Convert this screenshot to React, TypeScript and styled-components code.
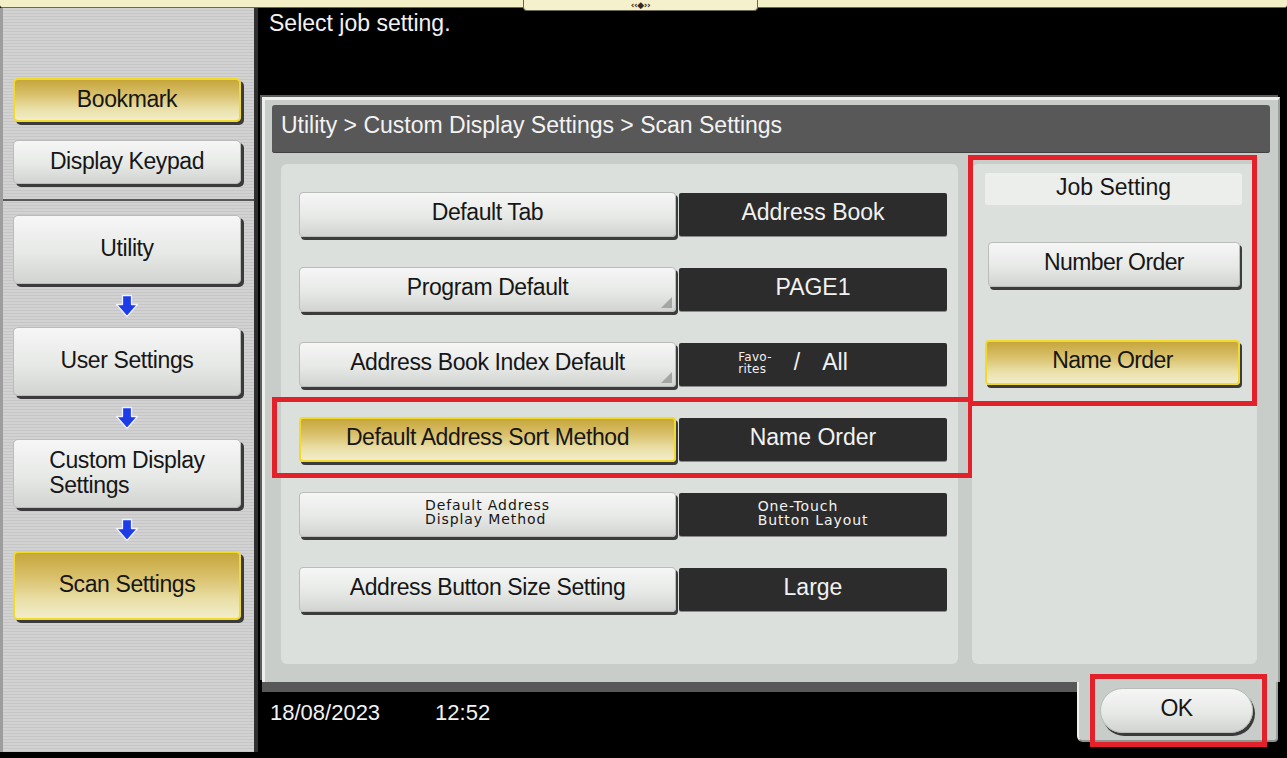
import React from "react";
import styled, {createGlobalStyle, css} from "styled-components";

const GlobalStyle = createGlobalStyle`
    html, body {
        margin: 0;
        padding: 0;
        background: #000;
    }
    body {
        font-family: "Liberation Sans", Arial, sans-serif;
    }
`;

const greyFace = css`
    background: linear-gradient(180deg, #f5f6f5 0%, #e7e9e7 55%, #d1d4d1 100%);
    border: 1px solid #b9bcb9;
`;

const goldFace = css`
    background: linear-gradient(180deg, #c6a63c 0%, #d8bf68 35%, #e9dea4 70%, #f2edcb 100%);
    border: 2px solid #f1da2c;
`;

const Screen = styled.div`
    width: 1287px;
    height: 758px;
    display: flex;
    flex-direction: column;
    background: #000;
    overflow: hidden;
`;

const TopBar = styled.div`
    height: 7px;
    flex-shrink: 0;
    display: flex;
    justify-content: center;
    background: #f3efc6;
    border-bottom: 1px solid #6b6852;
    border-radius: 0 0 3px 3px;
`;

const Handle = styled.div`
    position: relative;
    z-index: 2;
    width: 235px;
    height: 11px;
    margin-left: -6px;
    box-sizing: border-box;
    background: #f5f1cc;
    border: 1px solid #6b6852;
    border-top: none;
    border-radius: 0 0 4px 4px;
    font-family: "DejaVu Sans", sans-serif;
    font-size: 9px;
    font-weight: bold;
    line-height: 10px;
    letter-spacing: -0.5px;
    text-align: center;
    color: #2d2a1e;
`;

const Body = styled.div`
    flex: 1;
    display: flex;
    min-height: 0;
`;

const Sidebar = styled.aside`
    width: 258px;
    flex-shrink: 0;
    box-sizing: border-box;
    margin-bottom: 6px;
    display: flex;
    flex-direction: column;
    border-left: 3px solid #9d9d9d;
    border-right: 4px solid #2f2f2f;
    background: repeating-linear-gradient(180deg, #d2d2d2 0 2px, #c6c6c6 2px 3px);
`;

const ShortcutGroup = styled.div`
    display: flex;
    flex-direction: column;
    gap: 18px;
    padding: 70px 10px 15px;
    border-bottom: 2px solid #575757;
`;

const NavTrail = styled.nav`
    display: flex;
    flex-direction: column;
    padding: 14px 10px 0;
`;

const SideButton = styled.div<{ $active?: boolean; $tall?: boolean }>`
    width: 228px;
    height: ${p => p.$tall ? 69 : 44}px;
    box-sizing: border-box;
    padding-bottom: 2px;
    display: flex;
    align-items: center;
    justify-content: center;
    border-radius: 5px;
    box-shadow: 3px 3px 0 #3b3b3b;
    font-size: 23px;
    letter-spacing: -0.4px;
    color: #161616;
    ${p => p.$active ? goldFace : greyFace};
`;

const TwoLine = styled.span`
    display: inline-block;
    text-align: left;
    line-height: 25px;
`;

const ArrowSlot = styled.div`
    height: 43px;
    width: 228px;
    display: flex;
    align-items: center;
    justify-content: center;
`;

const Main = styled.main`
    flex: 1;
    display: flex;
    flex-direction: column;
    min-width: 0;
`;

const Message = styled.div`
    height: 89px;
    flex-shrink: 0;
    box-sizing: border-box;
    padding: 2px 0 0 11px;
    font-size: 23px;
    color: #f2f2f2;
`;

const Panel = styled.section`
    height: 585px;
    flex-shrink: 0;
    box-sizing: border-box;
    margin: 0 7px 0 4px;
    padding: 5px 8px 18px 7px;
    display: flex;
    flex-direction: column;
    background: #c8cdc9;
    border-top: 3px solid #eef0ee;
    border-left: 3px solid #eef0ee;
    border-right: 2px solid #9aa09b;
    box-shadow: -2px -2px 0 #5d5d5d;
`;

const Breadcrumb = styled.header`
    height: 48px;
    flex-shrink: 0;
    box-sizing: border-box;
    padding: 0 0 7px 9px;
    display: flex;
    align-items: center;
    background: #585858;
    border-radius: 3px;
    box-shadow: inset 0 -1px 0 #404040;
    font-size: 23px;
    color: #f3f3f3;
`;

const Content = styled.div`
    flex: 1;
    margin-top: 11px;
    padding: 0 13px 0 9px;
    display: flex;
    gap: 14px;
`;

const SettingsBox = styled.div`
    width: 677px;
    box-sizing: border-box;
    padding: 28px 0 0 18px;
    display: flex;
    flex-direction: column;
    gap: 30px;
    background: #dbe0dc;
    border-radius: 6px;
`;

const Row = styled.div`
    position: relative;
    display: flex;
    gap: 3px;
`;

const LabelButton = styled.div<{ $active?: boolean; $more?: boolean }>`
    position: relative;
    width: 377px;
    height: 45px;
    box-sizing: border-box;
    padding-bottom: 5px;
    display: flex;
    align-items: center;
    justify-content: center;
    border-radius: 4px;
    box-shadow: 2px 3px 0 #3c3c3c;
    font-size: 23px;
    letter-spacing: -0.4px;
    color: #161616;
    ${p => p.$active ? goldFace : greyFace};

    ${p => p.$more && css`
        &::after {
            content: "";
            position: absolute;
            right: 3px;
            bottom: 3px;
            border-left: 11px solid transparent;
            border-bottom: 11px solid #a3a6a3;
        }
    `}
`;

const ValueBox = styled.div<{ $shift?: number }>`
    width: 268px;
    height: 43px;
    margin-top: 1px;
    box-sizing: border-box;
    padding: 0 ${p => p.$shift ?? 0}px 4px 0;
    display: flex;
    align-items: center;
    justify-content: center;
    background: #2c2c2c;
    border-radius: 2px;
    box-shadow: 0 1px 0 #8a8a8a;
    font-size: 23px;
    color: #f2f2f2;
`;

const SmallText = styled.span<{ $size?: number }>`
    display: inline-block;
    text-align: left;
    font-family: "DejaVu Sans", sans-serif;
    font-size: ${p => p.$size ?? 14}px;
    line-height: ${p => p.$size ? p.$size : 14}px;
    letter-spacing: ${p => p.$size ? 0.3 : 0.9}px;
`;

const Split = styled.span`
    display: flex;
    align-items: center;
    gap: 22px;
`;

const JobBox = styled.div`
    position: relative;
    width: 285px;
    box-sizing: border-box;
    padding: 9px 0 0 13px;
    display: flex;
    flex-direction: column;
    background: #dbe0dc;
    border-radius: 6px;
`;

const JobLabel = styled.div`
    width: 257px;
    height: 32px;
    box-sizing: border-box;
    padding-bottom: 4px;
    display: flex;
    align-items: center;
    justify-content: center;
    background: #eceeec;
    border-radius: 3px;
    font-size: 23px;
    color: #161616;
`;

const ChoiceButton = styled.div<{ $active?: boolean; $gap: number }>`
    width: ${p => p.$active ? 255 : 252}px;
    height: 45px;
    margin: ${p => p.$gap}px 0 0 ${p => p.$active ? 0 : 3}px;
    box-sizing: border-box;
    padding-bottom: 5px;
    display: flex;
    align-items: center;
    justify-content: center;
    border-radius: 4px;
    box-shadow: 2px 3px 0 #3c3c3c;
    font-size: 23px;
    letter-spacing: -0.6px;
    color: #161616;
    ${p => p.$active ? goldFace : greyFace};
`;

const Footer = styled.footer`
    flex: 1;
    display: flex;
`;

const FooterInfo = styled.div`
    flex: 1;
    display: flex;
    flex-direction: column;
`;

const PanelLip = styled.div`
    height: 10px;
    margin-left: 4px;
    background: #585858;
`;

const Clock = styled.div`
    display: flex;
    gap: 55px;
    padding: 8px 0 0 12px;
    font-size: 22px;
    color: #f2f2f2;
`;

const OkTab = styled.div`
    position: relative;
    width: 201px;
    height: 60px;
    margin-right: 9px;
    box-sizing: border-box;
    padding: 6px 0 0 21px;
    background: #c8cdc9;
    border-left: 2px solid #eef0ee;
    border-right: 2px solid #9aa09b;
    border-bottom: 2px solid #8f948f;
    border-radius: 0 0 4px 6px;
`;

const OkButton = styled.div`
    width: 153px;
    height: 45px;
    box-sizing: border-box;
    padding-bottom: 4px;
    display: flex;
    align-items: center;
    justify-content: center;
    border-radius: 23px;
    box-shadow: 2px 3px 0 #3a3a3a;
    font-size: 23px;
    letter-spacing: -0.6px;
    color: #161616;
    ${greyFace};
`;

const Callout = styled.span<{ $inset: string }>`
    position: absolute;
    inset: ${p => p.$inset};
    border: 5px solid #e2212b;
    pointer-events: none;
`;

const DownArrow = () =>
    <svg width="26" height="24" viewBox="0 0 26 24">
        <path d="M8.5 1.5h9v9h6L13 22.5 2.5 10.5h6z" fill="#1d3ce8" stroke="#eef1ff" strokeWidth="1.3"
              strokeLinejoin="round"/>
    </svg>;

const trail = ["Utility", "User Settings", "Custom Display Settings", "Scan Settings"];

export default function App() {
    return <Screen>
        <GlobalStyle/>
        <TopBar><Handle>‹‹◆››</Handle></TopBar>
        <Body>
            <Sidebar>
                <ShortcutGroup>
                    <SideButton $active>Bookmark</SideButton>
                    <SideButton>Display Keypad</SideButton>
                </ShortcutGroup>
                <NavTrail>
                    {trail.map((item, idx) => <React.Fragment key={item}>
                        {idx > 0 && <ArrowSlot><DownArrow/></ArrowSlot>}
                        <SideButton $tall $active={idx === trail.length - 1}>
                            {item === "Custom Display Settings"
                                ? <TwoLine>Custom Display<br/>Settings</TwoLine>
                                : item}
                        </SideButton>
                    </React.Fragment>)}
                </NavTrail>
            </Sidebar>
            <Main>
                <Message>Select job setting.</Message>
                <Panel>
                    <Breadcrumb>Utility &gt; Custom Display Settings &gt; Scan Settings</Breadcrumb>
                    <Content>
                        <SettingsBox>
                            <Row>
                                <LabelButton>Default Tab</LabelButton>
                                <ValueBox>Address Book</ValueBox>
                            </Row>
                            <Row>
                                <LabelButton $more>Program Default</LabelButton>
                                <ValueBox>PAGE1</ValueBox>
                            </Row>
                            <Row>
                                <LabelButton $more>Address Book Index Default</LabelButton>
                                <ValueBox $shift={40}>
                                    <Split>
                                        <SmallText $size={12}>Favo-<br/>rites</SmallText>
                                        <span>/</span>
                                        <span>All</span>
                                    </Split>
                                </ValueBox>
                            </Row>
                            <Row>
                                <LabelButton $active>Default Address Sort Method</LabelButton>
                                <ValueBox>Name Order</ValueBox>
                                <Callout $inset="-20px -15px -16px -27px"/>
                            </Row>
                            <Row>
                                <LabelButton>
                                    <SmallText>Default Address<br/>Display Method</SmallText>
                                </LabelButton>
                                <ValueBox>
                                    <SmallText>One-Touch<br/>Button Layout</SmallText>
                                </ValueBox>
                            </Row>
                            <Row>
                                <LabelButton>Address Button Size Setting</LabelButton>
                                <ValueBox>Large</ValueBox>
                            </Row>
                        </SettingsBox>
                        <JobBox>
                            <JobLabel>Job Setting</JobLabel>
                            <ChoiceButton $gap={37}>Number Order</ChoiceButton>
                            <ChoiceButton $gap={53} $active>Name Order</ChoiceButton>
                            <Callout $inset="-9px 0 258px -4px"/>
                        </JobBox>
                    </Content>
                </Panel>
                <Footer>
                    <FooterInfo>
                        <PanelLip/>
                        <Clock>
                            <span>18/08/2023</span>
                            <span>12:52</span>
                        </Clock>
                    </FooterInfo>
                    <OkTab>
                        <OkButton>OK</OkButton>
                        <Callout $inset="-8px 9px -7px 11px"/>
                    </OkTab>
                </Footer>
            </Main>
        </Body>
    </Screen>;
}
